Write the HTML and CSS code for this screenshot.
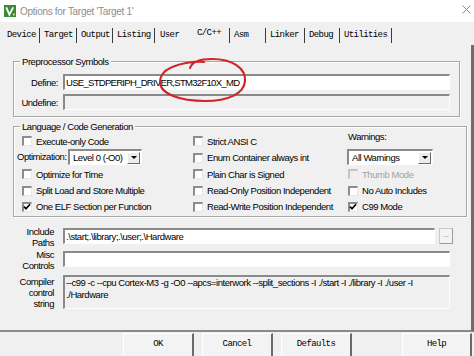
FILE: index.html
```html
<!DOCTYPE html>
<html>
<head>
<meta charset="utf-8">
<title>Options for Target</title>
<link rel="stylesheet" href="styles.css">
</head>
<body>
<div class="window">
  <header class="titlebar">
    <svg class="app-icon" viewBox="0 0 12 12" width="12" height="12">
      <rect x="0" y="0" width="12" height="12" fill="#3b8c3a"/>
      <path d="M2.3 2.3 L5.4 9.6 L9.2 2.3" fill="none" stroke="#fff" stroke-width="1.8"/>
      <rect x="9" y="8.6" width="1.8" height="1.8" fill="#f2e27a"/>
    </svg>
    <span class="title">Options for Target 'Target 1'</span>
    <svg class="close" viewBox="0 0 9 9" width="9" height="9">
      <path d="M0.5 0.5 L8.5 8.5 M8.5 0.5 L0.5 8.5" stroke="#8c8c8c" stroke-width="1"/>
    </svg>
  </header>

  <nav class="tabs">
    <span class="tab">Device</span>
    <span class="tab">Target</span>
    <span class="tab">Output</span>
    <span class="tab">Listing</span>
    <span class="tab tab-plain">User</span>
    <span class="tab tab-active">C/C++</span>
    <span class="tab">Asm</span>
    <span class="tab">Linker</span>
    <span class="tab">Debug</span>
    <span class="tab">Utilities</span>
  </nav>

  <section class="panel">
    <fieldset class="group group-pre">
      <legend>Preprocessor Symbols</legend>
      <div class="sym-row">
        <span class="sym-label">Define:</span>
        <div class="field field-define">USE_STDPERIPH_DRIVER,STM32F10X_MD</div>
      </div>
      <div class="sym-row">
        <span class="sym-label">Undefine:</span>
        <div class="field field-disabled"></div>
      </div>
    </fieldset>

    <fieldset class="group group-lang">
      <legend>Language / Code Generation</legend>
      <div class="lang-grid">
        <div class="cell col1"><span class="box"></span><span>Execute-only Code</span></div>
        <div class="cell col2"><span class="box"></span><span>Strict ANSI C</span></div>
        <div class="cell col3 warn-label">Warnings:</div>

        <div class="cell col1 opt-row">
          <span class="opt-label">Optimization:</span>
          <div class="select select-opt"><span class="select-text">Level 0 (-O0)</span><span class="drop"><i class="tri"></i></span></div>
        </div>
        <div class="cell col2"><span class="box"></span><span>Enum Container always int</span></div>
        <div class="cell col3 warn-cell">
          <div class="select select-warn"><span class="select-text">All Warnings</span><span class="drop"><i class="tri"></i></span></div>
        </div>

        <div class="cell col1"><span class="box"></span><span>Optimize for Time</span></div>
        <div class="cell col2"><span class="box"></span><span>Plain Char is Signed</span></div>
        <div class="cell col3 disabled"><span class="box"></span><span>Thumb Mode</span></div>

        <div class="cell col1"><span class="box"></span><span>Split Load and Store Multiple</span></div>
        <div class="cell col2"><span class="box"></span><span>Read-Only Position Independent</span></div>
        <div class="cell col3"><span class="box"></span><span>No Auto Includes</span></div>

        <div class="cell col1"><span class="box checked"><svg viewBox="0 0 8 8" width="8" height="8"><path d="M1 3.6 L3 5.8 L7 1.2" fill="none" stroke="#000" stroke-width="1.7"/></svg></span><span>One ELF Section per Function</span></div>
        <div class="cell col2"><span class="box"></span><span>Read-Write Position Independent</span></div>
        <div class="cell col3"><span class="box checked"><svg viewBox="0 0 8 8" width="8" height="8"><path d="M1 3.6 L3 5.8 L7 1.2" fill="none" stroke="#000" stroke-width="1.7"/></svg></span><span>C99 Mode</span></div>
      </div>
    </fieldset>

    <div class="paths">
      <div class="path-row row-include">
        <span class="path-label">Include<br>Paths</span>
        <div class="field field-include">.\start;.\library;.\user;.\Hardware</div>
        <span class="browse">...</span>
      </div>
      <div class="path-row row-misc">
        <span class="path-label">Misc<br>Controls</span>
        <div class="field field-wide"></div>
      </div>
      <div class="path-row row-compiler">
        <span class="path-label">Compiler<br>control<br>string</span>
        <div class="field field-wide field-compiler">--c99 -c --cpu Cortex-M3 -g -O0 --apcs=interwork --split_sections -I ./start -I ./library -I ./user -I<br>./Hardware</div>
      </div>
    </div>
  </section>

  <footer class="buttons">
    <span class="btn">OK</span>
    <span class="btn">Cancel</span>
    <span class="btn">Defaults</span>
    <span class="btn btn-help">Help</span>
  </footer>

  <svg class="annotation" viewBox="0 0 474 356" width="474" height="356">
    <path d="M190 68 C192 62, 200 59, 212 59 C232 59, 246 68, 245 81 C244 94, 228 101, 205 101 C180 101, 160 94, 160 82 C160 72, 170 66, 186 63 C193 62, 199 61, 204 62" fill="none" stroke="#d3222a" stroke-width="2.2" stroke-linecap="round"/>
  </svg>
</div>
</body>
</html>
```

FILE: styles.css
```css
* { box-sizing: border-box; }
html, body { margin: 0; padding: 0; }
body {
  width: 474px;
  height: 356px;
  overflow: hidden;
  background: #f0f0f0;
  font-family: "Liberation Sans", Arial, sans-serif;
  font-size: 9.5px;
  letter-spacing: -0.45px;
  color: #000;
}
.window { position: relative; width: 474px; height: 356px; }

/* title bar */
.titlebar {
  height: 22px;
  background: #fff;
  display: flex;
  align-items: center;
  padding: 0 3px 0 4px;
}
.app-icon { flex: none; display: block; }
.title { margin-left: 4px; font-size: 10px; letter-spacing: -0.3px; color: #8e8e8e; }
.close { margin-left: auto; align-self: flex-start; margin-top: 5px; display: block; }

/* tabs */
.tabs {
  height: 23px;
  display: grid;
  grid-template-columns: 37px 37px 36px 42px 37px 38px 36px 39px 35px 52px;
  padding: 6px 0 0 3px;
  font-family: "Liberation Mono", "Courier New", monospace;
  font-size: 9px;
  letter-spacing: -0.6px;
}
.tab {
  height: 15px;
  line-height: 15px;
  padding-left: 4px;
  border-right: 1px solid #3c3c3c;
  white-space: nowrap;
}
.tab-plain { border-right: none; padding-left: 5px; }
.tab-active { padding-left: 5px; line-height: 11px; }

/* main panel */
.panel {
  width: 474px;
  height: 287px;
  border-right: 3px solid #6e6e6e;
  border-bottom: 2px solid #8a8a8a;
  padding: 11px 0 0 13px;
}
.group {
  margin: 0;
  padding: 0;
  border: 1px solid #a6a6a6;
  box-shadow: inset 1px 1px 0 #fff, 1px 1px 0 #fff;
}
.group legend {
  margin-left: 6px;
  padding: 0 2px;
  line-height: 11px;
  background: #f0f0f0;
}
.group-pre { width: 447px; padding: 7px 0 6px 0; }
.sym-row { display: flex; align-items: center; height: 16px; }
.sym-row + .sym-row { margin-top: 4px; }
.sym-label { width: 44px; text-align: right; margin-right: 5px; }

.field {
  height: 16px;
  background: #fff;
  border-top: 2px solid #8a8a8a;
  border-left: 2px solid #8a8a8a;
  border-right: 1px solid #fdfdfd;
  border-bottom: 1px solid #fdfdfd;
  padding-left: 1px;
  line-height: 13px;
  white-space: nowrap;
}
.group-pre .field { width: 387px; }
.field-define { letter-spacing: -0.7px; }
.field-disabled { background: #f0f0f0; }

.group-lang { width: 454px; margin-top: 4px; padding: 1px 0 2px 0; }
.lang-grid {
  display: grid;
  grid-template-columns: 179px 154px 1fr;
  grid-template-rows: 16px 17px 16px 17px 15px;
}
.cell { display: flex; align-items: center; gap: 4px; white-space: nowrap; }
.col1 { padding-left: 8px; }
.col2 { padding-left: 0; }
.col3 { padding-left: 1px; }
.warn-label { align-self: start; margin-top: -2px; line-height: 11px; }
.warn-cell { padding-left: 0; align-items: flex-start; }
.opt-row { padding-left: 3px; gap: 0; align-items: flex-start; }
.opt-label { width: 51px; line-height: 16px; }

.box {
  width: 10px;
  height: 10px;
  flex: none;
  background: #fff;
  border-top: 2px solid #8c8c8c;
  border-left: 2px solid #8c8c8c;
  border-right: 1px solid #e6e6e6;
  border-bottom: 1px solid #e6e6e6;
  display: flex;
  align-items: center;
  justify-content: center;
}
.box svg { display: block; margin: -1px 0 0 -1px; }
.disabled { color: #a3a3a3; }
.disabled .box { background: #f0f0f0; border-color: #c4c4c4 #ececec #ececec #c4c4c4; }

.select {
  height: 16px;
  display: flex;
  align-items: center;
  background: #fff;
  border-top: 2px solid #8a8a8a;
  border-left: 2px solid #8a8a8a;
  border-right: 1px solid #fdfdfd;
  border-bottom: 1px solid #fdfdfd;
}
.select-opt { width: 74px; }
.select-warn { width: 86px; }
.select-text { padding-left: 3px; flex: 1; }
.drop {
  width: 13px;
  height: 12px;
  margin-right: 1px;
  background: #ececec;
  border-top: 1px solid #fff;
  border-left: 1px solid #fff;
  border-right: 1px solid #6a6a6a;
  border-bottom: 1px solid #6a6a6a;
  display: flex;
  align-items: center;
  justify-content: center;
}
.tri {
  width: 0;
  height: 0;
  border-left: 3px solid transparent;
  border-right: 3px solid transparent;
  border-top: 3px solid #000;
}

/* paths */
.paths { margin-top: 9px; }
.path-row { display: flex; align-items: flex-start; }
.path-label { width: 41px; text-align: right; line-height: 11px; margin-right: 9px; }
.row-include .field, .row-misc .field { margin-top: 2px; }
.field-include { width: 372px; }
.field-wide { width: 387px; }
.row-misc { margin-top: 1px; }
.row-compiler { margin-top: 4px; }
.row-compiler .path-label { padding-top: 1px; }
.field-compiler {
  height: 34px;
  background: #f0f0f0;
  line-height: 12px;
  padding-left: 1px;
}
.browse {
  width: 14px;
  height: 16px;
  margin: 2px 0 0 4px;
  background: #f4f4f4;
  border: 1px solid #c9c9c9;
  border-right-color: #9a9a9a;
  border-bottom-color: #9a9a9a;
  color: #8a8a8a;
  font-size: 8px;
  text-align: center;
  line-height: 12px;
}

/* bottom buttons */
.buttons {
  display: flex;
  gap: 8px;
  padding: 1px 2px 0 123px;
  font-family: "Liberation Mono", "Courier New", monospace;
  font-size: 9px;
  letter-spacing: -0.6px;
}
.btn {
  width: 71px;
  height: 24px;
  line-height: 20px;
  text-align: center;
  background: #f3f3f3;
  border-top: 1px solid #fff;
  border-left: 1px solid #fff;
  border-right: 2px solid #6a6a6a;
}
.btn-help { margin-left: auto; width: 70px; }

.annotation { position: absolute; left: 0; top: 0; pointer-events: none; }
```
